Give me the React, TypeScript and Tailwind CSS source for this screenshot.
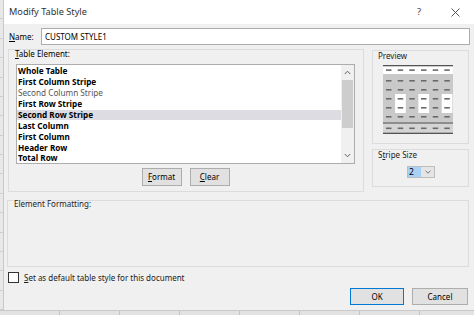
import React from "react";

const font = { fontFamily: '"Noto Sans", "Open Sans", Arial, sans-serif' };

function Preview() {
  const cols = [3, 14.7, 26.3, 38, 49.7, 61.3];
  const bodyRows = [15, 24, 33, 42, 51];
  return (
    <svg width="70" height="69" viewBox="0 0 70 69">
      <rect x="0" y="0" width="70" height="69" fill="#c9c9c9" />
      <rect x="0" y="1" width="70" height="8" fill="#ffffff" />
      {[1, 3, 5].map((c) => (
        <rect key={c} x={cols[c] - 2.6} y="29" width="10.7" height="19" fill="#ffffff" />
      ))}
      <rect x="0" y="59" width="70" height="9" fill="#d4d4d4" />
      <rect x="0" y="0" width="70" height="1.3" fill="#555555" />
      <rect x="0" y="57.5" width="70" height="1" fill="#555555" />
      <rect x="0" y="67.7" width="70" height="1.3" fill="#555555" />
      {cols.map((x) => (
        <g key={x}>
          <rect x={x} y="4.3" width="5.5" height="1.6" fill="#6a6a6a" />
          {bodyRows.map((y) => (
            <rect key={y} x={x} y={y} width="5.5" height="1.6" fill="#6a6a6a" />
          ))}
          <rect x={x} y="62.5" width="5.5" height="1.6" fill="#6a6a6a" />
        </g>
      ))}
    </svg>
  );
}

const items: { label: string; bold: boolean }[] = [
  { label: "Whole Table", bold: true },
  { label: "First Column Stripe", bold: true },
  { label: "Second Column Stripe", bold: false },
  { label: "First Row Stripe", bold: true },
  { label: "Second Row Stripe", bold: true },
  { label: "Last Column", bold: true },
  { label: "First Column", bold: true },
  { label: "Header Row", bold: true },
  { label: "Total Row", bold: true },
];

export default function App() {
  return (
    <div className="w-[474px] h-[315px] overflow-hidden flex flex-col bg-[#e6e6e6] text-black" style={font}>
      <div className="flex h-[310px]">
        {/* excel grid on left */}
        <div className="w-[3px] flex flex-col bg-[#e8e8e8]">
          {Array.from({ length: 16 }).map((_, i) => (
            <div key={i} className="h-[20px] border-b border-[#cfcfcf]" />
          ))}
        </div>
        {/* dialog */}
        <div className="flex-1 flex flex-col bg-[#f0f0f0] border-l border-[#c9c9c9]">
          {/* title bar */}
          <div className="h-[24px] bg-white flex items-center pl-[5px] pr-[14px] shrink-0">
            <span className="text-[9.2px] leading-none text-[#333]">Modify Table Style</span>
            <span className="ml-auto text-[9.5px] leading-none text-[#444] mr-[30px]">?</span>
            <svg width="9" height="9" viewBox="0 0 9 9" className="mt-[1px]">
              <path d="M0.5 0.5 L8.5 8.5 M8.5 0.5 L0.5 8.5" stroke="#444" strokeWidth="0.9" />
            </svg>
          </div>
          {/* name row */}
          <div className="flex items-center mt-[4px] h-[17px] pl-[5px] pr-[4px]">
            <span className="text-[8px] leading-none w-[32px]">
              <span className="underline">N</span>ame:
            </span>
            <div className="flex-1 h-[17px] bg-white border border-[#adadad] flex items-center pl-[3px] text-[8px] leading-none">
              CUSTOM STYLE1
            </div>
          </div>
          {/* main row */}
          <div className="flex mt-[4px] pl-[4px] pr-[5px]">
            {/* table element group */}
            <div className="w-[356px] h-[143px] border border-[#dcdcdc] flex flex-col pl-[7px] pr-[8px]">
              <div className="text-[8px] leading-[10px] mt-[-1px] ml-[-1px]">
                <span className="underline">T</span>able Element:
              </div>
              <div className="mt-[5px] h-[100px] bg-white border border-[#adadad] flex overflow-hidden">
                <div className="flex-1 flex flex-col pt-[1px] overflow-hidden">
                  {items.map((it, i) => (
                    <div
                      key={it.label}
                      className={`h-[10.9px] shrink-0 flex items-center pl-[1px] text-[8.2px] leading-none ${
                        it.bold ? "font-bold text-black" : "text-[#555]"
                      } ${i === 4 ? "bg-[#dcdce2]" : ""}`}
                    >
                      {it.label}
                    </div>
                  ))}
                </div>
                <div className="w-[13px] bg-[#f0f0f0] flex flex-col items-center">
                  <div className="h-[15px] flex items-center justify-center">
                    <svg width="7" height="5" viewBox="0 0 7 5">
                      <path d="M0.8 4 L3.5 1.2 L6.2 4" fill="none" stroke="#606060" strokeWidth="1" />
                    </svg>
                  </div>
                  <div className="w-[11px] h-[48px] bg-[#cdcdcd]" />
                  <div className="flex-1" />
                  <div className="h-[15px] flex items-center justify-center">
                    <svg width="7" height="5" viewBox="0 0 7 5">
                      <path d="M0.8 1 L3.5 3.8 L6.2 1" fill="none" stroke="#606060" strokeWidth="1" />
                    </svg>
                  </div>
                </div>
              </div>
              <div className="flex justify-center gap-[8px] mt-[4px]">
                <div className="w-[40px] h-[18px] bg-[#e1e1e1] border border-[#adadad] flex items-center justify-center text-[8px] leading-none">
                  <span className="underline">F</span>ormat
                </div>
                <div className="w-[40px] h-[18px] bg-[#e1e1e1] border border-[#adadad] flex items-center justify-center text-[8px] leading-none">
                  <span className="underline">C</span>lear
                </div>
              </div>
            </div>
            {/* right column */}
            <div className="ml-[8px] flex-1 flex flex-col">
              <div className="h-[94px] mt-[1px] border border-[#dcdcdc] flex flex-col pl-[5px]">
                <div className="text-[8px] leading-[11px] mt-[-1px] text-[#222]">Preview</div>
                <div className="mt-[4px] ml-[5px]">
                  <Preview />
                </div>
              </div>
              <div className="h-[38px] mt-[5px] border border-[#dcdcdc] flex flex-col pl-[5px]">
                <div className="text-[8px] leading-[11px] mt-[-1px] text-[#222]">
                  S<span className="underline">t</span>ripe Size
                </div>
                <div className="mt-[6px] ml-[29px] flex h-[12px] w-[28px] border border-[#bdbdbd] bg-[#e5e5e5]">
                  <div className="w-[13px] bg-[#a9d1f5] flex items-center pl-[1px] text-[8.5px] leading-none">2</div>
                  <div className="flex-1 flex items-center justify-center">
                    <svg width="6" height="4" viewBox="0 0 6 4">
                      <path d="M0.5 0.8 L3 3.2 L5.5 0.8" fill="none" stroke="#666" strokeWidth="0.9" />
                    </svg>
                  </div>
                </div>
              </div>
            </div>
          </div>
          {/* element formatting */}
          <div className="mt-[8px] ml-[3px] mr-[5px] h-[67px] border border-[#dcdcdc] pl-[6px]">
            <div className="text-[8px] leading-[11px] mt-[-3px] text-[#222]">Element Formatting:</div>
          </div>
          {/* checkbox */}
          <div className="flex items-center mt-[5px] ml-[4px] h-[11px]">
            <div className="w-[11px] h-[11px] bg-white border border-[#333]" />
            <span className="ml-[5px] text-[8px] leading-none text-[#222]">
              <span className="underline">S</span>et as default table style for this document
            </span>
          </div>
          {/* buttons */}
          <div className="flex justify-end gap-[8px] mt-[5px] mr-[6px]">
            <div className="w-[54px] h-[17px] bg-[#e1e1e1] border border-[#0078d7] flex items-center justify-center text-[8px] leading-none">
              OK
            </div>
            <div className="w-[56px] h-[17px] bg-[#e1e1e1] border border-[#adadad] flex items-center justify-center text-[8px] leading-none">
              Cancel
            </div>
          </div>
        </div>
      </div>
      {/* excel grid bottom */}
      <div className="h-[5px] flex bg-[#e2e2e2] border-t border-[#c9c9c9]">
        {Array.from({ length: 8 }).map((_, i) => (
          <div key={i} className="w-[60px] shrink-0 border-r border-[#c4c4c4]" />
        ))}
      </div>
    </div>
  );
}
